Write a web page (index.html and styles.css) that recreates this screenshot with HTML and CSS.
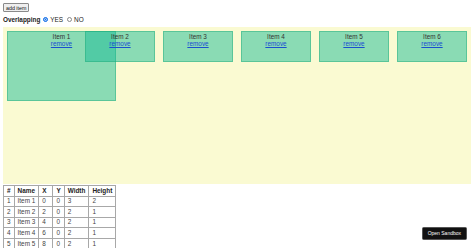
FILE: index.html
```html
<!DOCTYPE html>
<html>
<head>
<meta charset="utf-8">
<link rel="stylesheet" href="styles.css">
</head>
<body>
<div class="app">
  <button class="add-btn">add item</button>
  <div class="toolbar">
    <span class="label">Overlapping</span>
    <label class="opt"><span class="radio checked"></span>YES</label>
    <label class="opt"><span class="radio"></span>NO</label>
  </div>
  <div class="grid">
    <div class="item i1"><span>Item 1</span><a href="#">remove</a></div>
    <div class="item i2"><span>Item 2</span><a href="#">remove</a></div>
    <div class="item i3"><span>Item 3</span><a href="#">remove</a></div>
    <div class="item i4"><span>Item 4</span><a href="#">remove</a></div>
    <div class="item i5"><span>Item 5</span><a href="#">remove</a></div>
    <div class="item i6"><span>Item 6</span><a href="#">remove</a></div>
  </div>
  <table class="data">
    <thead>
      <tr><th>#</th><th>Name</th><th>X</th><th>Y</th><th>Width</th><th>Height</th></tr>
    </thead>
    <tbody>
      <tr><td>1</td><td>Item 1</td><td>0</td><td>0</td><td>3</td><td>2</td></tr>
      <tr><td>2</td><td>Item 2</td><td>2</td><td>0</td><td>2</td><td>1</td></tr>
      <tr><td>3</td><td>Item 3</td><td>4</td><td>0</td><td>2</td><td>1</td></tr>
      <tr><td>4</td><td>Item 4</td><td>6</td><td>0</td><td>2</td><td>1</td></tr>
      <tr><td>5</td><td>Item 5</td><td>8</td><td>0</td><td>2</td><td>1</td></tr>
      <tr><td>6</td><td>Item 6</td><td>10</td><td>0</td><td>2</td><td>1</td></tr>
    </tbody>
  </table>
</div>
<a class="sandbox" href="#">Open Sandbox</a>
</body>
</html>
```

FILE: styles.css
```css
html, body {
  margin: 0;
  padding: 0;
  background: #fff;
}
body {
  font-family: "Liberation Sans", Arial, sans-serif;
  font-size: 6.4px;
  color: #222;
}
.app {
  padding: 3px 3px 0 3px;
}
.add-btn {
  display: block;
  font-family: "Liberation Sans", Arial, sans-serif;
  font-size: 5.3px;
  line-height: 6px;
  height: 9px;
  padding: 0 2px;
  margin: 0;
  background: #efefef;
  border: 1px solid #8a8a8a;
  border-radius: 1px;
  color: #111;
}
.toolbar {
  display: flex;
  align-items: center;
  height: 8px;
  margin-top: 3px;
  margin-bottom: 4px;
}
.label {
  font-weight: bold;
  margin-right: 3px;
}
.opt {
  display: flex;
  align-items: center;
  margin-right: 4px;
}
.radio {
  box-sizing: border-box;
  width: 5px;
  height: 5px;
  border-radius: 50%;
  border: 0.6px solid #8a8a8a;
  margin-right: 2px;
  background: #fff;
}
.radio.checked {
  border: 1.2px solid #1a73e8;
  background: #1a73e8;
  box-shadow: inset 0 0 0 0.6px #fff;
}
.grid {
  display: grid;
  grid-template-columns: repeat(12, 31px);
  grid-template-rows: 31px 31px;
  gap: 8px;
  padding: 4px;
  width: 460px;
  height: 149px;
  align-content: start;
  background: #fafad2;
}
.item {
  box-sizing: border-box;
  display: flex;
  flex-direction: column;
  align-items: center;
  background: rgba(26, 188, 150, 0.5);
  border: 1px solid rgba(30, 170, 120, 0.45);
  padding-top: 1px;
  line-height: 7px;
  color: #333;
}
.item a {
  color: #1a4fd0;
  text-decoration: underline;
}
.i1 { grid-column: 1 / span 3; grid-row: 1 / span 2; }
.i2 { grid-column: 3 / span 2; grid-row: 1; }
.i3 { grid-column: 5 / span 2; grid-row: 1; }
.i4 { grid-column: 7 / span 2; grid-row: 1; }
.i5 { grid-column: 9 / span 2; grid-row: 1; }
.i6 { grid-column: 11 / span 2; grid-row: 1; }
.data {
  border-collapse: collapse;
  margin-top: 1px;
  font-size: 6.4px;
  color: #444;
}
.data th, .data td {
  border: 1px solid #a8a8a8;
  padding: 1.6px 3px;
  line-height: 6.4px;
  text-align: left;
}
.data th {
  font-weight: bold;
  color: #222;
}
.sandbox {
  position: fixed;
  right: 7px;
  bottom: 8px;
  background: #111;
  color: #fff;
  font-size: 5px;
  line-height: 11px;
  padding: 0 5px;
  border: 0.6px solid #555;
  border-radius: 1.5px;
  text-decoration: none;
}
```
